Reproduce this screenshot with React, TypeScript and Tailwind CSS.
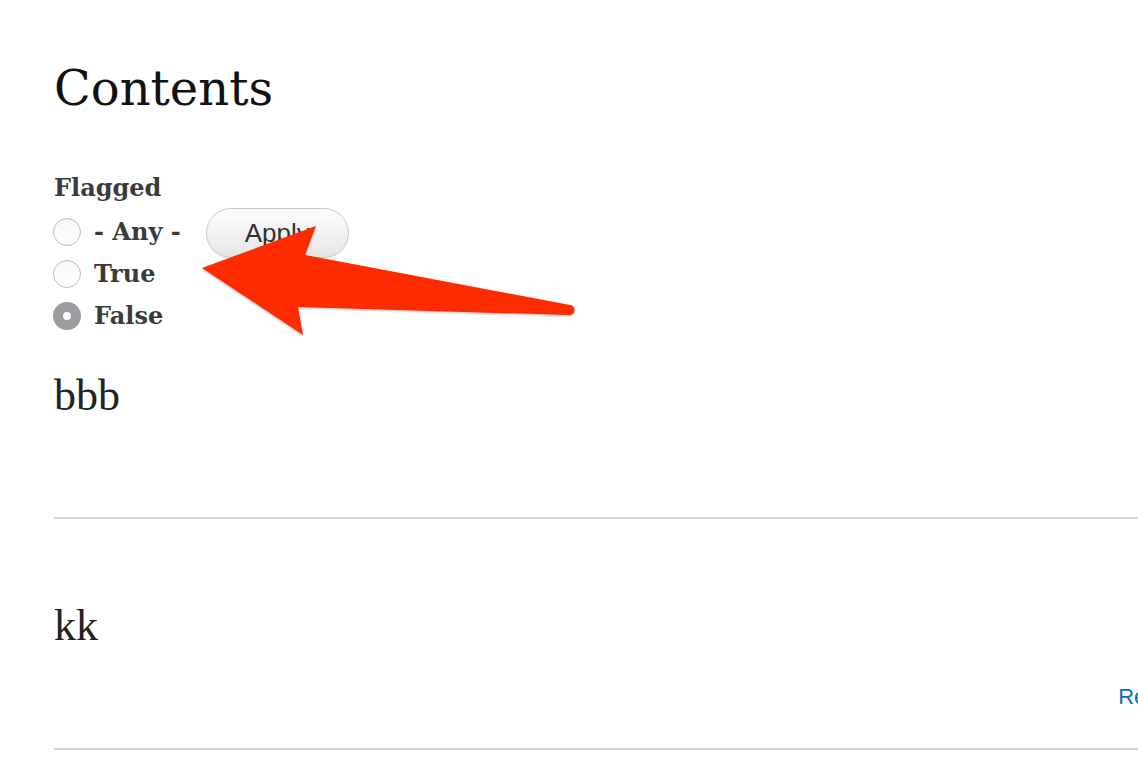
import React from "react";

const serif = { fontFamily: '"DejaVu Serif", Georgia, serif' };

function Radio({ checked, label }: { checked?: boolean; label: string }) {
  return (
    <label className="flex h-[42px] items-center gap-[13px]">
      {checked ? (
        <span className="ml-[-1px] flex h-[28px] w-[28px] items-center justify-center rounded-full bg-[#9c9ba0]">
          <span className="h-[8px] w-[8px] rounded-full bg-white" />
        </span>
      ) : (
        <span className="ml-[-1px] h-[28px] w-[28px] rounded-full border border-[#bdbdbd] bg-gradient-to-b from-[#f7f7f7] to-white" />
      )}
      <span
        className="text-[24px] font-bold leading-[28px] text-[#3b3b3b] whitespace-nowrap"
        style={serif}
      >
        {label}
      </span>
    </label>
  );
}

function Arrow() {
  return (
    <svg
      className="pointer-events-none absolute left-0 top-0"
      width="1138"
      height="768"
      viewBox="0 0 1138 768"
    >
      <defs>
        <filter id="sh" x="-10%" y="-20%" width="120%" height="140%">
          <feDropShadow dx="0" dy="1" stdDeviation="1" floodColor="#000" floodOpacity="0.3" />
        </filter>
      </defs>
      <path
        d="M202 268 L316 226 L305 255 L570 305 A5 5 0 0 1 569 315 L298 307 L303 335 Z"
        fill="#fe2900"
        filter="url(#sh)"
      />
    </svg>
  );
}

export default function App() {
  return (
    <div className="relative h-[768px] w-[1138px] overflow-hidden bg-white">
      <div className="w-[1227px] pl-[54px] pt-[60px]">
        <h1 className="text-[48px] leading-[56px] text-[#111]" style={serif}>
          Contents
        </h1>

        <div className="mt-[58px]">
          <div
            className="text-[24px] font-bold leading-[28px] text-[#3b3b3b]"
            style={serif}
          >
            Flagged
          </div>
          <div className="mt-[6px] flex items-start">
            <div className="pt-[3px]">
              <Radio label="- Any -" />
              <Radio label="True" />
              <Radio checked label="False" />
            </div>
            <button
              className="ml-[25px] h-[50px] w-[143px] rounded-full border border-[#c9c9c9] bg-gradient-to-b from-[#fdfdfd] to-[#e6e6e6] text-[26px] text-[#333] shadow-[0_1px_1px_rgba(0,0,0,0.08)]"
              style={{ fontFamily: '"Liberation Sans", Arial, sans-serif' }}
            >
              Apply
            </button>
          </div>
        </div>

        <div
          className="mt-[35px] text-[44px] leading-[48px] text-[#222]"
          style={{ fontFamily: '"Liberation Serif", Georgia, serif' }}
        >
          bbb
        </div>
        <div className="mt-[97px] h-[2px] bg-[#d4d7da]" />

        <div
          className="mt-[83px] text-[44px] leading-[48px] text-[#222]"
          style={{ fontFamily: '"Liberation Serif", Georgia, serif' }}
        >
          kk
        </div>
        <div
          className="mt-[34px] text-right text-[22px] leading-[26px] text-[#0a71b8]"
          style={{ fontFamily: '"Liberation Sans", Arial, sans-serif' }}
        >
          <a href="#">Read more</a>
        </div>
        <div className="mt-[38px] h-[2px] bg-[#d4d7da]" />
      </div>
      <Arrow />
    </div>
  );
}
